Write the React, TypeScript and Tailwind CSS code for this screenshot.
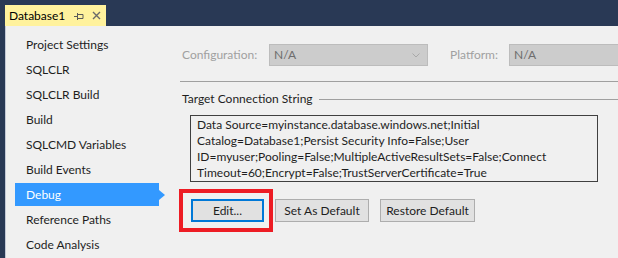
const navItems = [
  'Project Settings',
  'SQLCLR',
  'SQLCLR Build',
  'Build',
  'SQLCMD Variables',
  'Build Events',
  'Debug',
  'Reference Paths',
  'Code Analysis',
];

const connLines = [
  'Data Source=myinstance.database.windows.net;Initial',
  'Catalog=Database1;Persist Security Info=False;User',
  'ID=myuser;Pooling=False;MultipleActiveResultSets=False;Connect',
  'Timeout=60;Encrypt=False;TrustServerCertificate=True',
];

export default function App() {
  return (
    <div
      className="w-[618px] h-[258px] bg-[#293955] overflow-hidden flex flex-col text-[12px] text-[#1e1e1e]"
      style={{ fontFamily: 'Lato, "Noto Sans", sans-serif' }}
    >
      {/* Document tab */}
      <div className="h-[26px] pt-[5px] pl-[5px] flex shrink-0">
        <div className="w-[101px] h-[21px] bg-[#fff29d] flex items-center pl-[4px]">
          <span className="leading-none text-black">Database1</span>
          <svg className="ml-[9px]" width="10" height="8" viewBox="0 0 10 8">
            <path d="M0 4.5H3.5M3.5 1V8M3.5 2.5H9V6.5H3.5" fill="none" stroke="#5a5a5a" strokeWidth="1" />
          </svg>
          <svg className="ml-[8px]" width="9" height="9" viewBox="0 0 9 9">
            <path d="M1 1L8 8M8 1L1 8" stroke="#6a6a6a" strokeWidth="1.4" />
          </svg>
        </div>
      </div>

      {/* Property page */}
      <div className="flex-1 flex ml-[5px] bg-[#f0f0f0] border-l border-[#c3c9d6] overflow-hidden">
        {/* Left nav */}
        <div className="w-[164px] shrink-0 pt-[6px] flex flex-col">
          {navItems.map((item) =>
            item === 'Debug' ? (
              <div key={item} className="h-[25px] py-px flex items-center">
                <div className="ml-[9px] w-[144px] h-[23px] bg-[#3399ff] text-white flex items-center pl-[11px]">
                  {item}
                </div>
                <div className="w-0 h-0 border-y-[5px] border-y-transparent border-l-[6px] border-l-[#3399ff]" />
              </div>
            ) : (
              <div key={item} className="h-[25px] flex items-center pl-[20px]">
                {item}
              </div>
            ),
          )}
        </div>

        {/* Right content */}
        <div className="flex-1 min-w-0 pl-[10px] flex flex-col">
          <div className="mt-[18px] h-[22px] flex items-center text-[#a0a0a0]">
            <span className="w-[89px] shrink-0 pl-[2px]">Configuration:</span>
            <div className="w-[159px] shrink-0 h-[22px] bg-[#cccccc] border border-[#bcbcbc] flex items-center pl-[4px] pr-[7px] text-[#6d6d6d]">
              <span className="flex-1">N/A</span>
              <svg width="8" height="5" viewBox="0 0 8 5">
                <path d="M0.5 0.5L4 4L7.5 0.5" fill="none" stroke="#a8a8a8" strokeWidth="1" />
              </svg>
            </div>
            <span className="ml-[22px] w-[59px] shrink-0">Platform:</span>
            <div className="w-[140px] shrink-0 h-[22px] bg-[#cccccc] border border-[#bcbcbc] flex items-center pl-[4px] text-[#6d6d6d]">
              N/A
            </div>
          </div>

          <div className="mt-[15px] h-px bg-[#a0a0a0]" />

          <div className="mt-[9px] h-[16px] flex items-center">
            <span className="pl-[2px] pr-[6px]">Target Connection String</span>
            <div className="flex-1 h-px bg-[#a0a0a0]" />
          </div>

          <div className="mt-[8px] ml-[10px] w-[408px] h-[67px] border border-[#404040] pl-[6px] pt-px leading-[16px]">
            {connLines.map((l) => (
              <div key={l} className="whitespace-nowrap">
                {l}
              </div>
            ))}
          </div>

          <div className="mt-[17px] ml-[11px] flex gap-[11px]">
            <div className="relative">
              <button className="w-[73px] h-[23px] bg-[#e1e1e1] border-2 border-[#0078d7] text-[#1e1e1e]">
                Edit...
              </button>
              <div className="absolute left-[-12px] top-[-10px] w-[94px] h-[43px] border-4 border-[#ed1c24] pointer-events-none" />
            </div>
            <button className="w-[94px] h-[23px] bg-[#e1e1e1] border border-[#adadad]">Set As Default</button>
            <button className="w-[95px] h-[23px] bg-[#e1e1e1] border border-[#adadad]">Restore Default</button>
          </div>
        </div>
      </div>
    </div>
  );
}
